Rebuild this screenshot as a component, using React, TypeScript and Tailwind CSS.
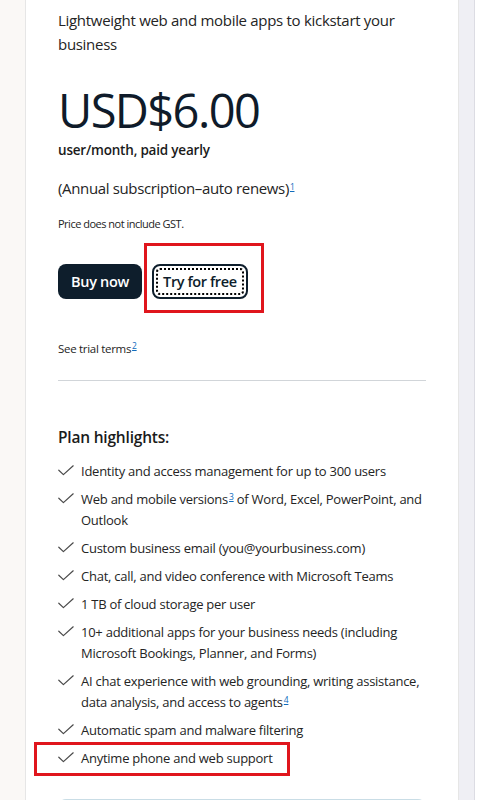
const font = { fontFamily: '"Open Sans", "Noto Sans", Arial, sans-serif' }

const Sup = ({ n }: { n: string }) => (
  <sup className="ml-[1px] text-[8.5px] text-[#0f6cbd] underline">{n}</sup>
)

const CheckMark = () => (
  <svg viewBox="0 0 16 12" className="mt-[4px] h-[12px] w-[16px] shrink-0" fill="none">
    <polyline points="0.8,5.2 5.4,9.6 15.2,0.8" stroke="#4a4a4a" strokeWidth="1.2" strokeLinecap="round" strokeLinejoin="round" />
  </svg>
)

const highlights: { text: React.ReactNode; marked?: boolean }[] = [
  { text: "Identity and access management for up to 300 users" },
  {
    text: (
      <>
        Web and mobile versions<Sup n="3" /> of Word, Excel, PowerPoint, and Outlook
      </>
    ),
  },
  { text: "Custom business email (you@yourbusiness.com)" },
  { text: "Chat, call, and video conference with Microsoft Teams" },
  { text: "1 TB of cloud storage per user" },
  { text: "10+ additional apps for your business needs (including Microsoft Bookings, Planner, and Forms)" },
  {
    text: (
      <>
        AI chat experience with web grounding, writing assistance, data analysis, and access to agents
        <Sup n="4" />
      </>
    ),
  },
  { text: "Automatic spam and malware filtering" },
  { text: "Anytime phone and web support", marked: true },
]

export default function App() {
  return (
    <div className="h-[800px] overflow-hidden bg-[#faf8f6] text-[#1b1b1b]" style={font}>
      <div className="flex h-full">
        <div className="w-[25px] shrink-0" />
        {/* plan card */}
        <div className="w-[434px] shrink-0 border-x border-[#e6e6e6] bg-white px-[32px]">
          <p className="pt-[8px] text-[15px] leading-6 tracking-[-0.3px] text-[#242424]">
            Lightweight web and mobile apps to kickstart your business
          </p>

          <div className="mt-[24px] text-[47px] leading-[60px] tracking-[-1.6px] text-[#0f1b2a]">USD$6.00</div>
          <div className="mt-0 text-[13.5px] font-semibold leading-5 tracking-[-0.2px] text-[#1b1b1b]">
            user/month, paid yearly
          </div>

          <p className="mt-[18px] text-[15px] leading-5 tracking-[-0.35px] text-[#242424]">
            (Annual subscription–auto renews)
            <Sup n="1" />
          </p>
          <p className="mt-[18px] text-[11px] leading-4 tracking-[-0.5px] text-[#242424]">Price does not include GST.</p>

          <div className="mt-[32px] flex items-center gap-[10px]">
            <button className="h-[35px] rounded-lg bg-[#0e1e2c] px-[13px] text-[14.5px] font-semibold tracking-[-0.3px] text-white">
              Buy now
            </button>
            <div className="relative">
              <button className="h-[35px] rounded-lg border-2 border-[#0e1e2c] bg-white px-[9px] text-[14.5px] font-semibold tracking-[-0.4px] text-[#0e1e2c] outline-2 outline-offset-[-6px] outline-dotted outline-black">
                Try for free
              </button>
              <span className="pointer-events-none absolute -top-[21px] -bottom-[14px] -left-[8px] -right-[16px] border-[3px] border-[#e0161d]" />
            </div>
          </div>

          <p className="mt-[42px] text-[11.5px] leading-4 tracking-[-0.3px] text-[#242424]">
            See trial terms<Sup n="2" />
          </p>

          <hr className="mt-[23px] border-[#d1d5d9]" />

          <h3 className="mt-[44px] text-[15.5px] font-semibold leading-6 tracking-[-0.2px] text-[#1b1b1b]">Plan highlights:</h3>

          <ul className="mt-[12px] flex flex-col gap-[7px]">
            {highlights.map((h, i) => (
              <li key={i} className="relative flex gap-[7px] text-[13px] leading-[21px] tracking-[-0.25px] text-[#242424]">
                <CheckMark />
                <span>{h.text}</span>
                {h.marked && (
                  <span className="pointer-events-none absolute -top-[6px] -bottom-[7px] -left-[24px] w-[256px] border-[3px] border-[#e0161d]" />
                )}
              </li>
            ))}
          </ul>

          <div className="mt-[30px] h-[20px] rounded-t-lg border-t-2 border-x border-[#c9dde6]" />
        </div>
        {/* edge of the next card */}
        <div className="w-[16px] shrink-0 border-r border-[#dcdce3] bg-[#efeff4]" />
        <div className="flex-1 bg-white" />
      </div>
    </div>
  )
}
